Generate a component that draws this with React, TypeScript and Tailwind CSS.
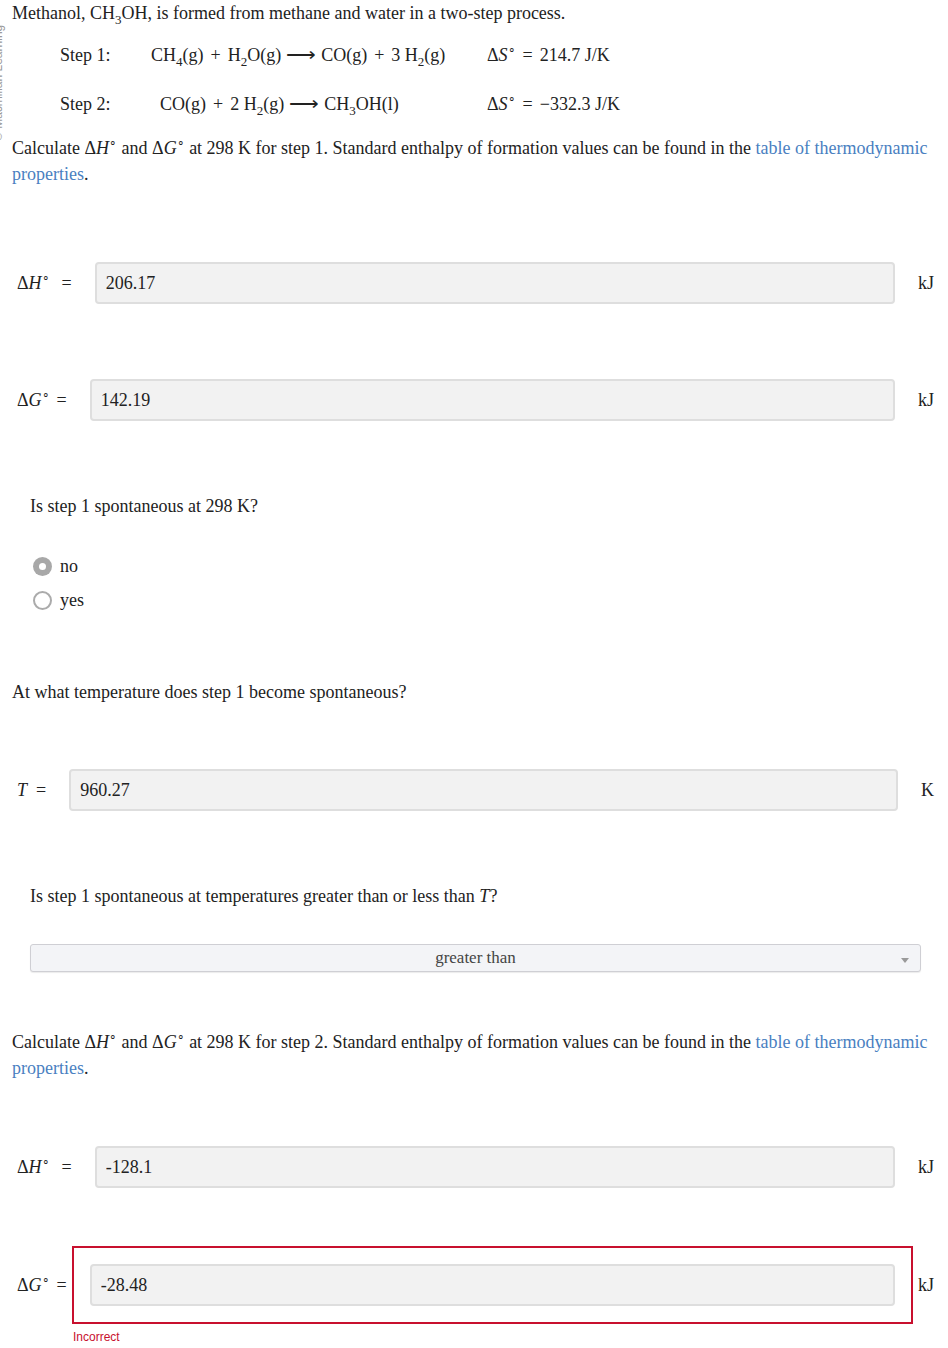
import React from "react";

const serif = { fontFamily: '"Liberation Serif", "Times New Roman", serif' };

function Deg() {
  return <span className="inline-block align-[7px] text-[12px] leading-none">∘</span>;
}

const eqGap: Record<string, string> = {
  H: "ml-[12px]",
  G: "ml-[7px]",
  T: "ml-[9px]",
};

function MathLabel({ v }: { v: string }) {
  return (
    <span className="whitespace-nowrap text-[18px] text-[#222]">
      {v !== "T" && <span>Δ</span>}
      <i>{v}</i>
      {v !== "T" && <Deg />}
      <span className={eqGap[v]}>=</span>
    </span>
  );
}

function AnswerRow({
  v,
  value,
  unit,
  incorrect = false,
}: {
  v: string;
  value: string;
  unit: string;
  incorrect?: boolean;
}) {
  return (
    <div className="flex items-center gap-[5px] pl-[5px] pr-[2px]">
      <MathLabel v={v} />
      <div
        className={`flex-1 border-2 p-[16px] ${
          incorrect ? "border-[#c8102e]" : "border-transparent"
        }`}
      >
        <input
          readOnly
          value={value}
          style={serif}
          className="h-[42px] w-full rounded-[4px] border-2 border-[#dedede] bg-[#f2f2f2] px-[9px] text-[18px] text-[#222] outline-none"
        />
      </div>
      <span className="text-[18px] text-[#222]">{unit}</span>
    </div>
  );
}

function Radio({ label, checked }: { label: string; checked?: boolean }) {
  return (
    <label className="flex h-[26px] items-center gap-[8px] pl-[21px]">
      {checked ? (
        <span className="flex h-[19px] w-[19px] items-center justify-center rounded-full bg-[#a8a8a8]">
          <span className="h-[7px] w-[7px] rounded-full bg-white" />
        </span>
      ) : (
        <span className="h-[19px] w-[19px] rounded-full border-2 border-[#ababab] bg-white" />
      )}
      <span className="text-[18px] text-[#222]">{label}</span>
    </label>
  );
}

function Sub({ children }: { children: React.ReactNode }) {
  return <span className="inline-block align-[-5px] text-[13px] leading-none">{children}</span>;
}

function Op({ children }: { children: React.ReactNode }) {
  return <span className="mx-[7px]">{children}</span>;
}

function Arrow() {
  return <span className="mx-[7px] inline-block scale-x-[1.15]">⟶</span>;
}

function Calc({ step }: { step: number }) {
  return (
    <p className="leading-[26px]">
      Calculate Δ<i>H</i>
      <Deg /> and Δ<i>G</i>
      <Deg /> at 298 K for step {step}. Standard enthalpy of formation values can be found in
      the <span className="text-[#4a7fc1]">table of thermodynamic properties</span>.
    </p>
  );
}

export default function App() {
  return (
    <div
      style={serif}
      className="relative min-h-[1348px] overflow-hidden bg-white px-[12px] text-[18px] text-[#222]"
    >
      {/* watermark */}
      <div
        style={{ fontFamily: '"Liberation Sans", Arial, sans-serif' }}
        className="absolute left-[-9px] top-[141px] origin-top-left -rotate-90 whitespace-nowrap text-[12px] leading-[14px] text-[#9a9a9a]"
      >
        © Macmillan Learning
      </div>

      <p className="leading-[26px]">
        Methanol, CH<Sub>3</Sub>OH, is formed from methane and water in a two-step process.
      </p>

      <div className="mt-[16px] flex h-[26px] items-center pl-[48px]">
        <span className="w-[91px]">Step 1:</span>
        <span className="w-[336px] whitespace-nowrap">
          CH<Sub>4</Sub>(g)<Op>+</Op>H<Sub>2</Sub>O(g)
          <Arrow />
          CO(g)<Op>+</Op>3 H<Sub>2</Sub>(g)
        </span>
        <span className="whitespace-nowrap">
          Δ<i>S</i>
          <Deg />
          <Op>=</Op>214.7 J/K
        </span>
      </div>

      <div className="mt-[23px] flex h-[26px] items-center pl-[48px]">
        <span className="w-[100px]">Step 2:</span>
        <span className="w-[327px] whitespace-nowrap">
          CO(g)<Op>+</Op>2 H<Sub>2</Sub>(g)
          <Arrow />
          CH<Sub>3</Sub>OH(l)
        </span>
        <span className="whitespace-nowrap">
          Δ<i>S</i>
          <Deg />
          <Op>=</Op>−332.3 J/K
        </span>
      </div>

      <div className="mt-[18px]">
        <Calc step={1} />
      </div>

      <div className="mt-[57px]">
        <AnswerRow v="H" value="206.17" unit="kJ" />
      </div>
      <div className="mt-[39px]">
        <AnswerRow v="G" value="142.19" unit="kJ" />
      </div>

      <p className="mt-[54px] pl-[18px] leading-[26px]">Is step 1 spontaneous at 298 K?</p>

      <div className="mt-[34px]">
        <Radio label="no" checked />
      </div>
      <div className="mt-[8px]">
        <Radio label="yes" />
      </div>

      <p className="mt-[66px] leading-[26px]">
        At what temperature does step 1 become spontaneous?
      </p>

      <div className="mt-[46px]">
        <AnswerRow v="T" value="960.27" unit="K" />
      </div>

      <p className="mt-[54px] pl-[18px] leading-[26px]">
        Is step 1 spontaneous at temperatures greater than or less than <i>T</i>?
      </p>

      <div className="ml-[18px] mr-[15px] mt-[35px] flex h-[28px] items-center rounded-[3px] border border-[#cfcfd4] bg-[#f3f4f7] pl-[19px] shadow-[0_1px_1px_rgba(0,0,0,0.08)]">
        <span className="flex-1 text-center text-[17px] text-[#444]">greater than</span>
        <svg width="8" height="5" viewBox="0 0 8 5" className="mr-[11px] mt-[4px]">
          <path d="M0 0 L8 0 L4 5 Z" fill="#9a9a9a" />
        </svg>
      </div>

      <div className="mt-[57px]">
        <Calc step={2} />
      </div>

      <div className="mt-[47px]">
        <AnswerRow v="H" value="-128.1" unit="kJ" />
      </div>
      <div className="mt-[40px]">
        <AnswerRow v="G" value="-28.48" unit="kJ" incorrect />
      </div>
      <p
        style={{ fontFamily: '"Liberation Sans", Arial, sans-serif' }}
        className="mt-[5px] pl-[61px] text-[12px] leading-[16px] text-[#c8102e]"
      >
        Incorrect
      </p>
    </div>
  );
}
